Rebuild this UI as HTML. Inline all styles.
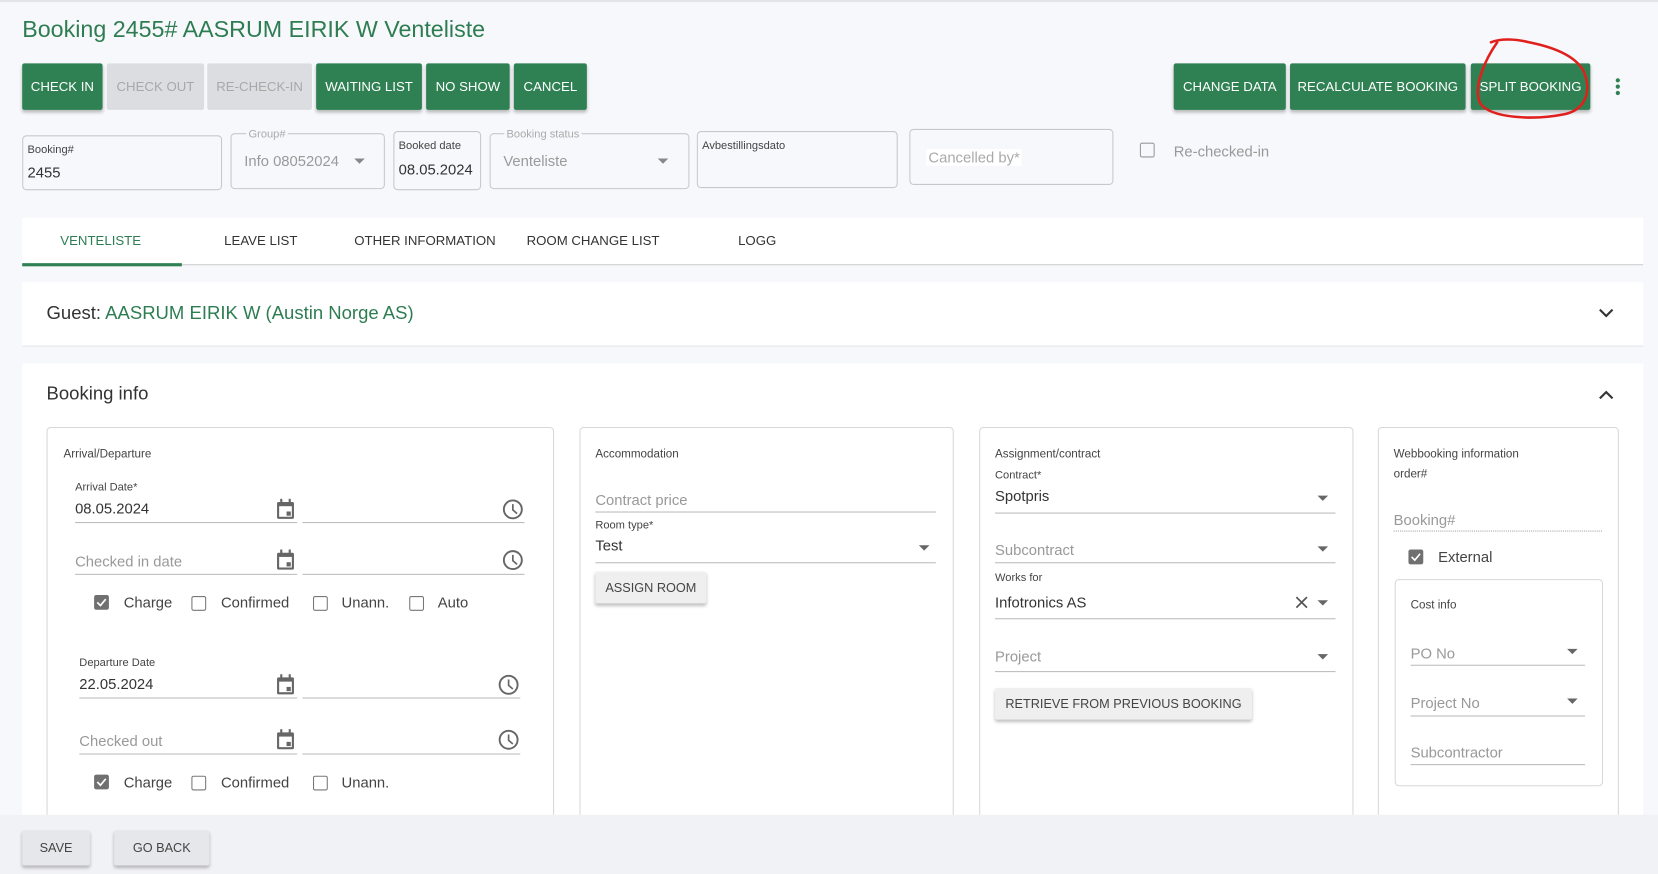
<!DOCTYPE html>
<html><head><meta charset="utf-8">
<style>
html,body{margin:0;padding:0;width:1658px;height:874px;overflow:hidden;background:#f7f8fb;}
#s{position:absolute;left:0;top:0;width:1568px;height:827px;transform:scale(1.0574,1.0568);transform-origin:0 0;font-family:"Liberation Sans",sans-serif;color:#333;}
#s div,#s span{position:absolute;white-space:nowrap;}
.btn{height:44px;top:60px;background:#2f8153;color:#fff;font-size:12.5px;line-height:44px;text-align:center;border-radius:2px;box-shadow:0 2px 3px rgba(0,0,0,.25);}
.dis{background:#dcdde0;color:#a8a8a8;box-shadow:none;}
.ob{border:1px solid #c8c8cc;border-radius:4px;background:#f7f8fb;}
.lg{font-size:10.5px;color:#444;}
.lgg{font-size:10.5px;color:#aaa;background:#f7f8fb;padding:0 2px;}
.card{border:1px solid #d8d8d8;border-radius:4px;top:404px;height:420px;background:#fff;}
.ttl{font-size:11px;color:#444;}
.sm{font-size:10.5px;color:#444;}
.val{font-size:14px;color:#333;}
.ph{font-size:14px;color:#999;}
.ul{height:1px;background:#bbb;}
.cb{width:12px;height:12px;border:1.6px solid #777;border-radius:2px;}
.cl{font-size:14px;color:#444;}
.arr{width:0;height:0;border-left:5px solid transparent;border-right:5px solid transparent;border-top:5px solid #666;}
.tab{top:221px;font-size:12.5px;color:#333;}
.gb{background:#efefef;color:#444;font-size:12px;text-align:center;border-radius:2px;box-shadow:0 2px 3px rgba(0,0,0,.25);}
</style></head><body>
<div id="s">
<div style="left:0;top:0;width:1568px;height:2px;background:#e4e5e8"></div>
<div style="left:21px;top:15px;font-size:22px;color:#2e7d52">Booking 2455# AASRUM EIRIK W Venteliste</div>

<div class="btn" style="left:21px;width:76px">CHECK IN</div>
<div class="btn dis" style="left:101px;width:92px">CHECK OUT</div>
<div class="btn dis" style="left:196px;width:99px">RE-CHECK-IN</div>
<div class="btn" style="left:299px;width:100px">WAITING LIST</div>
<div class="btn" style="left:403px;width:79px">NO SHOW</div>
<div class="btn" style="left:486px;width:69px">CANCEL</div>
<div class="btn" style="left:1110px;width:106px">CHANGE DATA</div>
<div class="btn" style="left:1220px;width:166px">RECALCULATE BOOKING</div>
<div class="btn" style="left:1391px;width:113px">SPLIT BOOKING</div>
<div style="left:1528px;top:74px;width:4px;height:4px;border-radius:2px;background:#2f8153"></div>
<div style="left:1528px;top:80px;width:4px;height:4px;border-radius:2px;background:#2f8153"></div>
<div style="left:1528px;top:86px;width:4px;height:4px;border-radius:2px;background:#2f8153"></div>

<div class="ob" style="left:21px;top:128px;width:187px;height:50px"></div>
<div class="lg" style="left:26px;top:136px">Booking#</div>
<div class="val" style="left:26px;top:155px">2455</div>
<div class="ob" style="left:218px;top:126px;width:144px;height:51px"></div>
<div class="lgg" style="left:233px;top:121px">Group#</div>
<div class="ph" style="left:231px;top:144px;color:#9a9a9a">Info 08052024</div>
<div class="arr" style="left:335px;top:150px;border-top-color:#888"></div>
<div class="ob" style="left:372px;top:124px;width:81px;height:54px"></div>
<div class="lg" style="left:377px;top:132px">Booked date</div>
<div class="val" style="left:377px;top:152px">08.05.2024</div>
<div class="ob" style="left:463px;top:126px;width:187px;height:51px"></div>
<div class="lgg" style="left:477px;top:121px">Booking status</div>
<div class="ph" style="left:476px;top:144px;color:#9a9a9a">Venteliste</div>
<div class="arr" style="left:622px;top:150px;border-top-color:#888"></div>
<div class="ob" style="left:659px;top:124px;width:188px;height:52px"></div>
<div class="lg" style="left:664px;top:132px">Avbestillingsdato</div>
<div class="ob" style="left:860px;top:122px;width:191px;height:51px"></div>
<div class="ph" style="left:876px;top:141px;color:#aaa;background:#fff;padding:0 2px">Cancelled by*</div>
<div class="cb" style="left:1078px;top:135px;border-color:#999"></div>
<div class="cl" style="left:1110px;top:135px;color:#999">Re-checked-in</div>

<div style="left:21px;top:206px;width:1533px;height:44px;background:#fff;border-bottom:1.5px solid #ccc"></div>
<div style="left:21px;top:249px;width:151px;height:2.5px;background:#2f8153"></div>
<div class="tab" style="left:57px;color:#2e7d52">VENTELISTE</div>
<div class="tab" style="left:212px">LEAVE LIST</div>
<div class="tab" style="left:335px">OTHER INFORMATION</div>
<div class="tab" style="left:498px">ROOM CHANGE LIST</div>
<div class="tab" style="left:698px">LOGG</div>

<div style="left:21px;top:267px;width:1533px;height:60px;background:#fff;border-bottom:1px solid #e2e3e7"></div>
<div style="left:44px;top:286px;font-size:17.5px;color:#333">Guest: <span style="position:static;color:#2e7d52">AASRUM EIRIK W (Austin Norge AS)</span></div>

<div style="left:21px;top:344px;width:1533px;height:430px;background:#fff"></div>
<div style="left:44px;top:362px;font-size:17.5px;color:#333">Booking info</div>

<!-- card1 -->
<div class="card" style="left:44px;width:478px"></div>
<div class="ttl" style="left:60px;top:424px">Arrival/Departure</div>
<div class="sm" style="left:71px;top:455px">Arrival Date*</div>
<div class="val" style="left:71px;top:473px">08.05.2024</div>
<div class="ul" style="left:71px;top:494px;width:210px"></div>
<div class="ul" style="left:286px;top:494px;width:210px"></div>
<div class="ph" style="left:71px;top:523px">Checked in date</div>
<div class="ul" style="left:71px;top:543px;width:210px"></div>
<div class="ul" style="left:286px;top:543px;width:210px"></div>
<div class="sm" style="left:75px;top:621px">Departure Date</div>
<div class="val" style="left:75px;top:639px">22.05.2024</div>
<div class="ul" style="left:75px;top:660px;width:206px"></div>
<div class="ul" style="left:286px;top:660px;width:206px"></div>
<div class="ph" style="left:75px;top:693px">Checked out</div>
<div class="ul" style="left:75px;top:713px;width:206px"></div>
<div class="ul" style="left:286px;top:713px;width:206px"></div>

<div class="cb" style="left:181px;top:564px"></div><div class="cl" style="left:209px;top:562px">Confirmed</div>
<div class="cl" style="left:117px;top:562px">Charge</div>
<div class="cb" style="left:296px;top:564px"></div><div class="cl" style="left:323px;top:562px">Unann.</div>
<div class="cb" style="left:387px;top:564px"></div><div class="cl" style="left:414px;top:562px">Auto</div>
<div class="cl" style="left:117px;top:732px">Charge</div>
<div class="cb" style="left:181px;top:734px"></div><div class="cl" style="left:209px;top:732px">Confirmed</div>
<div class="cb" style="left:296px;top:734px"></div><div class="cl" style="left:323px;top:732px">Unann.</div>

<!-- card2 -->
<div class="card" style="left:548px;width:352px"></div>
<div class="ttl" style="left:563px;top:424px">Accommodation</div>
<div class="ph" style="left:563px;top:465px">Contract price</div>
<div class="ul" style="left:563px;top:484px;width:322px"></div>
<div class="sm" style="left:563px;top:491px">Room type*</div>
<div class="val" style="left:563px;top:508px">Test</div>
<div class="arr" style="left:869px;top:516px"></div>
<div class="ul" style="left:563px;top:532px;width:322px"></div>
<div class="gb" style="left:563px;top:541px;width:105px;height:30px;line-height:30px">ASSIGN ROOM</div>

<!-- card3 -->
<div class="card" style="left:926px;width:352px"></div>
<div class="ttl" style="left:941px;top:424px">Assignment/contract</div>
<div class="sm" style="left:941px;top:444px">Contract*</div>
<div class="val" style="left:941px;top:461px">Spotpris</div>
<div class="arr" style="left:1246px;top:469px"></div>
<div class="ul" style="left:941px;top:485px;width:322px"></div>
<div class="ph" style="left:941px;top:512px">Subcontract</div>
<div class="arr" style="left:1246px;top:517px"></div>
<div class="ul" style="left:941px;top:532px;width:322px"></div>
<div class="sm" style="left:941px;top:541px">Works for</div>
<div class="val" style="left:941px;top:562px">Infotronics AS</div>
<div class="arr" style="left:1246px;top:568px"></div>
<div class="ul" style="left:941px;top:585px;width:322px"></div>
<div class="ph" style="left:941px;top:613px">Project</div>
<div class="arr" style="left:1246px;top:619px"></div>
<div class="ul" style="left:941px;top:635px;width:322px"></div>
<div class="gb" style="left:941px;top:651px;width:243px;height:30px;line-height:30px">RETRIEVE FROM PREVIOUS BOOKING</div>

<!-- card4 -->
<div class="card" style="left:1303px;width:226px"></div>
<div class="ttl" style="left:1318px;top:424px">Webbooking information</div>
<div class="ttl" style="left:1318px;top:443px">order#</div>
<div class="ph" style="left:1318px;top:484px">Booking#</div>
<div style="left:1318px;top:502px;width:197px;border-top:1px dotted #aaa"></div>
<div class="cl" style="left:1360px;top:519px">External</div>
<div style="left:1319px;top:548px;width:195px;height:194px;border:1px solid #d8d8d8;border-radius:4px"></div>
<div class="ttl" style="left:1334px;top:567px">Cost info</div>
<div class="ph" style="left:1334px;top:610px">PO No</div>
<div class="arr" style="left:1482px;top:614px"></div>
<div class="ul" style="left:1334px;top:629px;width:165px"></div>
<div class="ph" style="left:1334px;top:657px">Project No</div>
<div class="arr" style="left:1482px;top:661px"></div>
<div class="ul" style="left:1334px;top:677px;width:165px"></div>
<div class="ph" style="left:1334px;top:704px">Subcontractor</div>
<div class="ul" style="left:1334px;top:723px;width:165px"></div>

<!-- footer -->
<div style="left:0;top:771px;width:1568px;height:56px;background:#f1f2f6"></div>
<div class="gb" style="left:21px;top:786px;width:64px;height:33px;line-height:33px;background:#e6e7ea">SAVE</div>
<div class="gb" style="left:108px;top:786px;width:90px;height:33px;line-height:33px;background:#e6e7ea">GO BACK</div>

<svg style="position:absolute;left:0;top:0" width="1568" height="827">
<defs>
<g id="cal"><rect x="-8" y="-7" width="16" height="16" rx="1.5" fill="#666"/><rect x="-6" y="-3" width="12" height="10" fill="#fff"/><rect x="1" y="2" width="4" height="4" fill="#666"/><rect x="-5" y="-10" width="2" height="4" fill="#666"/><rect x="3" y="-10" width="2" height="4" fill="#666"/></g>
<g id="clk"><circle cx="0" cy="0" r="8.5" fill="none" stroke="#666" stroke-width="1.8"/><path d="M0 -5 V0.5 L4 4" fill="none" stroke="#666" stroke-width="1.6"/></g>
<g id="chk"><rect x="0" y="0" width="14" height="14" rx="2" fill="#707070"/><path d="M3 7 L6 10 L11 4" fill="none" stroke="#fff" stroke-width="1.6"/></g>
</defs>
<use href="#cal" x="270" y="482"/><use href="#clk" x="485" y="482"/>
<use href="#cal" x="270" y="530"/><use href="#clk" x="485" y="530"/>
<use href="#cal" x="270" y="648"/><use href="#clk" x="481" y="648"/>
<use href="#cal" x="270" y="700"/><use href="#clk" x="481" y="700"/>
<use href="#chk" x="89" y="563"/><use href="#chk" x="89" y="733"/><use href="#chk" x="1332" y="520"/>
<path d="M1226 565 L1236 575 M1236 565 L1226 575" stroke="#555" stroke-width="1.6"/>
<path d="M1513 293 L1519 299 L1525 293" fill="none" stroke="#333" stroke-width="2"/>
<path d="M1513 377 L1519 371 L1525 377" fill="none" stroke="#333" stroke-width="2"/>
<path d="M1416 40 C1406 54 1392 82 1400 98 C1410 112 1450 114 1480 108 C1498 104 1506 88 1498 68 C1490 52 1466 44 1446 40 C1434 37 1420 36 1410 40" fill="none" stroke="#e0201c" stroke-width="2.4" stroke-linecap="round"/>
</svg>
</div>
</body></html>
